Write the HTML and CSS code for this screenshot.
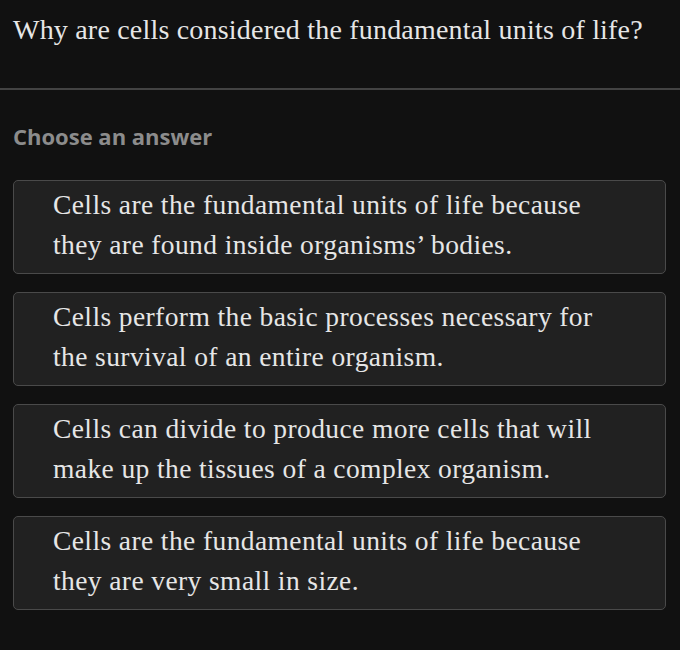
FILE: index.html
```html
<!DOCTYPE html>
<html>
<head>
  <title>Question</title>
  <link rel="stylesheet" href="styles.css">
</head>
<body>
  <div class="question">Why are cells considered the fundamental units of life?</div>
  <hr class="divider">
  <div class="answers">
    <h2 class="label">Choose an answer</h2>
    <div class="choice">Cells are the fundamental units of life because they are found inside organisms’ bodies.</div>
    <div class="choice">Cells perform the basic processes necessary for the survival of an entire organism.</div>
    <div class="choice">Cells can divide to produce more cells that will make up the tissues of a complex organism.</div>
    <div class="choice">Cells are the fundamental units of life because they are very small in size.</div>
  </div>
</body>
</html>
```
FILE: styles.css
```css
body {
  margin: 0;
  padding: 0;
  background-color: #111111;
  color: #e6e6e6;
  font-family: "Liberation Serif", serif;
}
.question {
  padding: 11px 13px 0;
  font-size: 28px;
  line-height: 38px;
  letter-spacing: 0.2px;
  height: 77px;
}
.divider {
  margin: 0;
  border: none;
  border-top: 2px solid #434343;
}
.answers {
  display: flex;
  flex-direction: column;
  gap: 18px;
  padding: 0 14px 0 13px;
}
.label {
  margin: 31px 0 11px;
  font-family: "Open Sans", sans-serif;
  font-weight: 700;
  font-size: 22px;
  line-height: 30px;
  color: #8c8c8c;
}
.choice {
  background-color: #212121;
  border: 1px solid #4a4a4a;
  border-radius: 5px;
  padding: 4px 50px 8px 39px;
  font-size: 27.5px;
  line-height: 40px;
  letter-spacing: 0.4px;
}
```
